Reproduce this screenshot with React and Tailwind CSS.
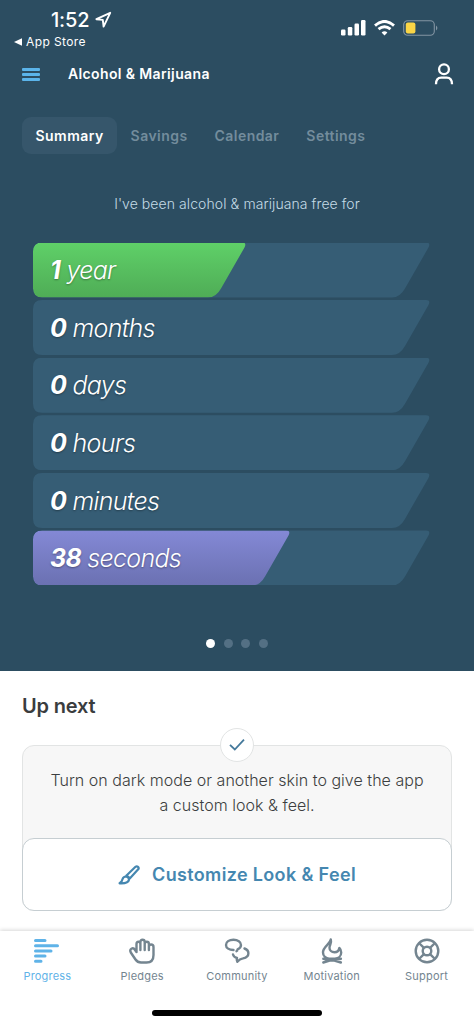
import { useState } from 'react';

const TABS = ['Summary', 'Savings', 'Calendar', 'Settings'];

const UNITS = [
  { value: 1, label: 'year', width: 213, fill: 'bg-linear-to-b from-[#5fd068] to-[#4fac56]' },
  { value: 0, label: 'months', width: 0 },
  { value: 0, label: 'days', width: 0 },
  { value: 0, label: 'hours', width: 0 },
  { value: 0, label: 'minutes', width: 0 },
  { value: 38, label: 'seconds', width: 257, fill: 'bg-linear-to-b from-[#8489d6] to-[#6b71b2]' },
];

// Slanted bar with rounded corners, w = width at the top edge
function barShape(w) {
  return `path('M9 0 H${w - 4} Q${w + 1} 0 ${w - 1.5} 5 L${w - 25} 46 Q${w - 30} 55 ${w - 38} 55 H9 Q0 55 0 46 V9 Q0 0 9 0 Z')`;
}

function StatusBar() {
  return (
    <div className="flex h-[54px] justify-between">
      <div>
        <div className="flex h-8 items-end pl-[51px]">
          <span className="text-[20px] leading-6 font-medium tracking-[-0.2px]">1:52</span>
          <svg className="mb-1 ml-1.5" width="17" height="17" viewBox="0 0 17 17" fill="none" stroke="currentColor" strokeWidth="1.9" strokeLinejoin="round">
            <path d="M15.2 1.8 L1.4 8.2 L7.8 8.9 L8.6 15.6 Z" />
          </svg>
        </div>
        <div className="flex h-[19px] items-center gap-1 pl-3.5">
          <svg width="8" height="8" viewBox="0 0 8 8" fill="currentColor">
            <path d="M0 4 L8 0.3 V7.7 Z" />
          </svg>
          <span className="text-[12px] tracking-[0.4px]">App Store</span>
        </div>
      </div>
      <div className="flex items-start gap-[8px] pt-5 pr-[35px]">
        <svg width="25" height="16" viewBox="0 0 25 16" fill="currentColor">
          <rect x="0" y="9.5" width="4.5" height="6" rx="1.2" />
          <rect x="6.8" y="7" width="4.5" height="8.5" rx="1.2" />
          <rect x="13.5" y="3.5" width="4.5" height="12" rx="1.2" />
          <rect x="20" y="0" width="4.5" height="15.5" rx="1.2" />
        </svg>
        <svg width="21" height="16" viewBox="0 0 21 16" fill="none" stroke="currentColor" strokeWidth="2.9">
          <path d="M1 5.6 Q10.5 -2.8 20 5.6" />
          <path d="M4.5 9.2 Q10.5 4.2 16.5 9.2" />
          <path d="M10.5 15.5 L7.6 12.5 Q10.5 9.8 13.4 12.5 Z" fill="currentColor" stroke="none" />
        </svg>
        <svg width="36" height="16" viewBox="0 0 36 16" fill="none">
          <rect x="0.7" y="0.7" width="30.6" height="14.6" rx="4" stroke="#8395a3" strokeWidth="1.1" />
          <rect x="2.8" y="2.6" width="9.6" height="10.8" rx="2" fill="#fad546" />
          <path d="M33 5.5 Q35.8 8 33 10.5 Z" fill="#8395a3" />
        </svg>
      </div>
    </div>
  );
}

function Header() {
  return (
    <div className="flex h-10 items-center pr-5 pl-[22px]">
      <div className="flex w-[18px] flex-col gap-0.5">
        <span className="h-[3px] rounded-[1px] bg-[#5bb4ea]" />
        <span className="h-[3px] rounded-[1px] bg-[#5bb4ea]" />
        <span className="h-[3px] rounded-[1px] bg-[#5bb4ea]" />
      </div>
      <h1 className="-mt-0.5 ml-7 text-[14px] font-semibold tracking-[0.37px]">Alcohol &amp; Marijuana</h1>
      <svg className="ml-auto" width="20" height="24" viewBox="0 0 20 24" fill="none" stroke="currentColor" strokeWidth="2.3">
        <circle cx="10" cy="7.3" r="4.9" />
        <path d="M2 22.3 C2 17.5 4 15.6 7.2 15.6 H12.8 C16 15.6 18 17.5 18 22.3" />
      </svg>
    </div>
  );
}

function UnitBar({ unit }) {
  return (
    <div className="relative flex h-[55px] items-center bg-[#365d75]" style={{ clipPath: barShape(397) }}>
      {unit.width > 0 && (
        <div className={`absolute inset-y-0 left-0 ${unit.fill}`} style={{ width: unit.width, clipPath: barShape(unit.width) }} />
      )}
      <p className="relative pt-[2px] pl-[17px] text-[25px] font-light tracking-[-0.7px] whitespace-nowrap italic [text-shadow:0_1px_2px_rgba(0,0,0,0.35)]">
        <b className="font-bold">{unit.value}</b> {unit.label}
      </p>
    </div>
  );
}

function NavItem({ label, active, children }) {
  return (
    <div className={`flex w-[94.8px] flex-col items-center gap-[3px] ${active ? 'text-[#5fb3e8]' : 'text-[#748590]'}`}>
      <svg width="28" height="28" viewBox="0 0 28 28" fill="none" stroke="currentColor" strokeWidth="2.4" strokeLinecap="round" strokeLinejoin="round">
        {children}
      </svg>
      <span className="text-[11px] leading-4 tracking-[0.2px]">{label}</span>
    </div>
  );
}

export default function App() {
  const [tab, setTab] = useState('Summary');

  return (
    <div className="flex h-[1025px] w-[474px] flex-col overflow-hidden bg-white font-['Inter',sans-serif]">
      <section className="flex h-[671px] shrink-0 flex-col bg-[#2c4d61] text-white">
        <StatusBar />
        <Header />

        <nav className="mt-[23px] flex h-[37px] pl-[22px]">
          {TABS.map((t) => (
            <button
              key={t}
              onClick={() => setTab(t)}
              className={`rounded-[9px] px-[13.5px] text-[14px] font-semibold tracking-[0.45px] ${t === tab ? 'bg-[#36566b] text-white' : 'text-[#738c9c]'}`}
            >
              {t}
            </button>
          ))}
        </nav>

        <p className="mt-[40px] text-center text-[14px] leading-5 font-light tracking-[0.08px] text-[#c4dbe6]">
          I've been alcohol &amp; marijuana free for
        </p>

        <div className="mt-[28.5px] flex w-[430px] flex-col gap-[2.6px] pl-[33px]">
          {UNITS.map((unit) => (
            <UnitBar key={unit.label} unit={unit} />
          ))}
        </div>

        <div className="mt-[54px] flex justify-center gap-[8.6px]">
          <span className="size-[9px] rounded-full bg-white" />
          <span className="size-[9px] rounded-full bg-[#547084]" />
          <span className="size-[9px] rounded-full bg-[#547084]" />
          <span className="size-[9px] rounded-full bg-[#547084]" />
        </div>
      </section>

      <section className="h-[260px] shrink-0 px-[22px] pt-5">
        <h2 className="text-[20px] leading-[30px] font-semibold tracking-[-0.2px] text-[#3a3c3e]">Up next</h2>
        <div className="relative mt-6 h-[166px] rounded-xl border border-[#e2e4e4] bg-[#f7f7f7]">
          <div className="absolute -top-[18px] left-1/2 flex size-[34px] -translate-x-1/2 items-center justify-center rounded-full border border-[#e2e4e4] bg-white">
            <svg width="16" height="14" viewBox="0 0 16 14" fill="none" stroke="#44799b" strokeWidth="1.8">
              <path d="M1 6.8 L5.8 11.5 L15 1.7" />
            </svg>
          </div>
          <p className="pt-[22px] text-center text-[16px] leading-[24.5px] font-light tracking-[0.03px] text-[#3c3e40]">
            Turn on dark mode or another skin to give the app
            <br />a custom look &amp; feel.
          </p>
          <button className="absolute -inset-x-px -bottom-px flex h-[73px] items-center justify-center gap-3 rounded-xl border border-[#c6ced2] bg-white text-[18px] font-semibold tracking-[0.35px] text-[#4587b0]">
            <svg width="22" height="20" viewBox="0 0 22 20" fill="none" stroke="currentColor" strokeWidth="2.2" strokeLinecap="round" strokeLinejoin="round">
              <path d="M8.5 10.5 L17.5 1.8 Q18.8 0.8 20 1.9 Q21.2 3 20.2 4.3 L12 13.2 L8.5 10.5" />
              <path d="M8 11.5 Q10.8 12 11.1 14.5 Q10.3 18.8 1.6 18.3 Q4.2 16.7 4.5 14.2 Q5.2 11.6 8 11.5 Z" />
            </svg>
            Customize Look &amp; Feel
          </button>
        </div>
      </section>

      <footer className="flex flex-1 flex-col items-center bg-white shadow-[0_-1px_4px_rgba(0,0,0,0.16)]">
        <div className="flex pt-[6px]">
          <NavItem label="Progress" active>
            <path d="M2.5 3.5 H12 M2.5 8.7 H24.5 M2.5 13.9 H18 M2.5 19.1 H12 M2.5 24.3 H8" strokeWidth="3" />
          </NavItem>
          <NavItem label="Pledges">
            <path d="M8.5 15 V7 Q8.5 4.8 10.5 4.8 Q12.4 4.8 12.4 7 V13 M12.4 7 V5 Q12.4 2.8 14.5 2.8 Q16.7 2.8 16.7 5 V13 M16.7 6.5 Q17 4.8 18.8 4.8 Q20.9 4.8 20.9 7 V13 M20.9 9.5 Q21.2 7.5 23 7.5 Q25.5 7.5 25.5 10 V18 Q25.5 25.5 18.5 25.5 H13 Q9.5 25.5 7.5 22.5 L2.8 15.5 Q1.5 12.8 3.4 11.7 Q5.6 10.6 7 13 L8.5 15" />
          </NavItem>
          <NavItem label="Community">
            <path d="M13.5 14.2 C14.2 13.9 14.5 13.3 14.5 12.4 C17 11.5 18 10 18 8 C18 5 14.8 2.8 10.5 2.8 C6 2.8 3 5 3 8 C3 11 6 13 10.5 13" />
            <path d="M21.5 11.5 C24 12.4 25.4 14 25.4 16.2 C25.4 18.8 23.3 20.7 20 21.4 C17.5 21.7 15.7 23 14.3 24.8 C13.6 23.5 13.6 22.3 14 21 C11.8 20.5 10.5 19.2 10 17.5" />
          </NavItem>
          <NavItem label="Motivation">
            <path d="M12.8 2.5 C12 7.5 5 9.5 5 15.5 C5 19.3 8 21.6 11.2 21.6 H16.8 C20.2 21.6 23.2 19.3 23.2 15.5 C23.2 13.5 22.6 12.2 21.3 11 C20.8 14 18.7 15.2 16.5 15.2 C13.5 15.2 11.5 13.3 11.5 10.7 C11.5 8 14 6.5 12.8 2.5 Z" />
            <path d="M5.3 25.5 L14 22.8 L22.9 25.5 M5.3 21.8 L14 23.5 L22.9 21.8" />
          </NavItem>
          <NavItem label="Support">
            <circle cx="14" cy="14" r="11.3" />
            <circle cx="14" cy="14" r="4.3" />
            <path d="M6.5 6.5 L10.7 10.7 M21.5 6.5 L17.3 10.7 M6.5 21.5 L10.7 17.3 M21.5 21.5 L17.3 17.3" />
          </NavItem>
        </div>
        <div className="mt-[26px] h-[6px] w-[170px] rounded-full bg-black" />
      </footer>
    </div>
  );
}
